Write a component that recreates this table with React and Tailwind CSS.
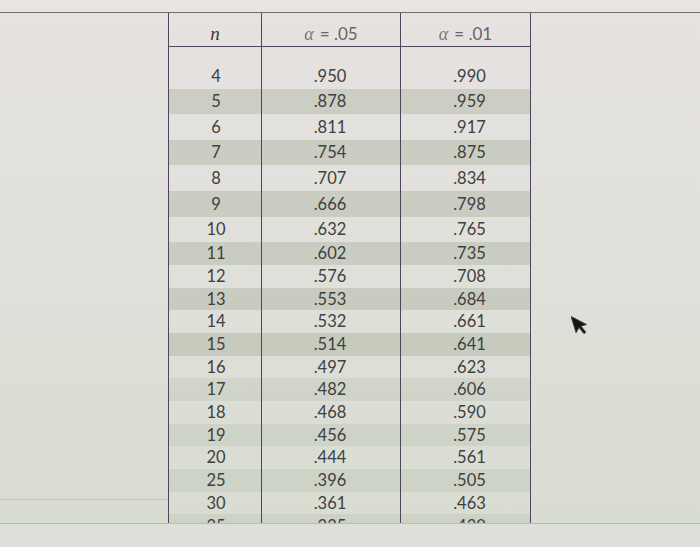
import React from "react";

const rows = [
  ["4", ".950", ".990"],
  ["5", ".878", ".959"],
  ["6", ".811", ".917"],
  ["7", ".754", ".875"],
  ["8", ".707", ".834"],
  ["9", ".666", ".798"],
  ["10", ".632", ".765"],
  ["11", ".602", ".735"],
  ["12", ".576", ".708"],
  ["13", ".553", ".684"],
  ["14", ".532", ".661"],
  ["15", ".514", ".641"],
  ["16", ".497", ".623"],
  ["17", ".482", ".606"],
  ["18", ".468", ".590"],
  ["19", ".456", ".575"],
  ["20", ".444", ".561"],
  ["25", ".396", ".505"],
  ["30", ".361", ".463"],
  ["35", ".335", ".430"],
];

function Cursor() {
  return (
    <svg
      className="absolute left-[571px] top-[313px]"
      width="18"
      height="24"
      viewBox="0 0 18 24"
    >
      <path
        d="M2 2 L3.5 19 L7.5 14.5 L11 21.5 L13.2 20.4 L9.8 13.6 L15.5 13 Z"
        fill="#151515"
        stroke="#3a3f44"
        strokeWidth="0.8"
        transform="rotate(-12 8 12)"
      />
    </svg>
  );
}

const serif = { fontFamily: "'Liberation Serif', serif" };

export default function App() {
  return (
    <div
      className="relative w-[700px] h-[547px] overflow-hidden bg-gradient-to-b from-[#e6e2e0] via-[#e0e0da] to-[#d7dcd0] text-[#404040]"
      style={{ fontFamily: "Lato, 'Open Sans', sans-serif" }}
    >
      {/* top edge of the page */}
      <div className="h-[13px] border-b border-[#6f6a72] bg-[#e8e4e2]"></div>

      <div className="flex">
        {/* left margin with faint panel outline */}
        <div className="w-[168px] h-[487px] border-b border-[#c3c3bd]"></div>

        {/* table */}
        <div className="w-[363px] h-[510px] overflow-hidden border-x border-[#4c4658]">
          <div className="grid grid-cols-[92px_139px_1fr] h-[34px] border-b border-[#4c4658] text-[17px] text-[#666] leading-none">
            <div className="flex items-center justify-center pt-[8px] italic text-[19px] text-[#3a3a3a]" style={serif}>n</div>
            <div className="flex items-center justify-center pt-[8px] border-l border-[#4c4658]">
              <span className="italic text-[#7a7a7a] text-[18px]" style={serif}>α</span>
              <span className="ml-[6px]">= .05</span>
            </div>
            <div className="flex items-center justify-center pt-[8px] border-l border-[#4c4658]">
              <span className="italic text-[#7a7a7a] text-[18px]" style={serif}>α</span>
              <span className="ml-[6px]">= .01</span>
            </div>
          </div>

          <div className="grid grid-cols-[92px_139px_1fr]">
            <div className="h-[16px]"></div>
            <div className="h-[16px] border-l border-[#4c4658]"></div>
            <div className="h-[16px] border-l border-[#4c4658]"></div>
          </div>

          {rows.map((r, i) => (
            <div
              key={r[0]}
              className={
                "grid grid-cols-[92px_139px_1fr] text-[16.5px] leading-none " +
                (i < 7 ? "h-[25.6px] " : "h-[22.7px] ") +
                (i % 2 === 1 ? (i < 12 ? "bg-[#6f7d5c]/20" : "bg-[#6f7d5c]/10") : "")
              }
            >
              <div className="flex items-center justify-center pl-[2px]">{r[0]}</div>
              <div className="flex items-center justify-center border-l border-[#4c4658] pr-[2px]">{r[1]}</div>
              <div className="flex items-center justify-center border-l border-[#4c4658] pl-[8px]">{r[2]}</div>
            </div>
          ))}
        </div>
      </div>

      <div className="border-t border-[#b9bdb2] h-[24px] bg-[#dde0d8]"></div>

      <Cursor />
    </div>
  );
}
